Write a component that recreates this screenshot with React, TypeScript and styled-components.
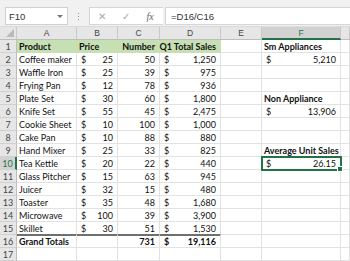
import React from 'react';
import styled, { createGlobalStyle, css } from 'styled-components';

const Global = createGlobalStyle`
  html, body { margin: 0; padding: 0; background: #ffffff; }
  body {
    width: 350px; height: 261px; overflow: hidden;
    font-family: Lato, "Liberation Sans", sans-serif;
    color: #111;
  }
`;

const Page = styled.div`
  display: flex;
  flex-direction: column;
  width: 350px;
  height: 261px;
  overflow: hidden;
`;

const FormulaBar = styled.div`
  display: flex;
  align-items: flex-start;
  height: 32px;
  box-sizing: border-box;
  padding: 7px 0 0 5px;
  background: #f1f1f1;
  border-bottom: 1px solid #dadada;
`;

const NameBox = styled.div`
  display: flex;
  align-items: center;
  justify-content: space-between;
  width: 63px;
  height: 18px;
  box-sizing: border-box;
  padding: 0 4px 0 3px;
  background: #fff;
  border: 1px solid #d0d0d0;
  font-family: "Liberation Sans", Arial, sans-serif;
  font-size: 9.5px;
  color: #333;
`;

const Caret = styled.span`
  width: 0; height: 0;
  border-left: 3px solid transparent;
  border-right: 3px solid transparent;
  border-top: 3px solid #777;
`;

const Grip = styled.div`
  display: flex;
  flex-direction: column;
  justify-content: center;
  gap: 2px;
  width: 21px;
  height: 18px;
  align-items: center;
  & > span { width: 1px; height: 1px; background: #9a9a9a; }
`;

const ButtonsBox = styled.div`
  display: flex;
  align-items: center;
  width: 74px;
  height: 18px;
  box-sizing: border-box;
  background: #fff;
  border: 1px solid #d6d6d6;
  border-right: none;
`;

const FxButton = styled.div<{ $w: number }>`
  display: flex;
  align-items: center;
  justify-content: center;
  width: ${p => p.$w}px;
  height: 16px;
  color: #a8a8a8;
  font-size: 10px;
`;

const FxText = styled.span`
  font-family: "Liberation Serif", serif;
  font-style: italic;
  font-size: 10px;
  color: #666;
`;

const FormulaInput = styled.div`
  flex: 1;
  display: flex;
  align-items: center;
  height: 18px;
  margin-left: 2px;
  box-sizing: border-box;
  padding-left: 5px;
  background: #fff;
  border: 1px solid #d6d6d6;
  border-right: none;
  font-family: "Liberation Sans", Arial, sans-serif;
  font-size: 9.5px;
  color: #333;
`;

const Sheet = styled.div`
  display: grid;
  grid-template-columns: 17px 60px 41px 42px 61px 41px 79px 1fr;
  grid-auto-rows: 13px;
  font-size: 9px;
`;

const Corner = styled.div`
  position: relative;
  background: #e6e6e6;
  border-right: 1px solid #c8c8c8;
  border-bottom: 1px solid #bdbdbd;
  box-sizing: border-box;
  &::after {
    content: '';
    position: absolute;
    right: 2px; bottom: 2px;
    width: 0; height: 0;
    border-left: 8px solid transparent;
    border-bottom: 8px solid #b9b9b9;
  }
`;

const ColHeader = styled.div<{ $active?: boolean }>`
  display: flex;
  align-items: center;
  justify-content: center;
  box-sizing: border-box;
  background: ${p => (p.$active ? '#d2d2d2' : '#e6e6e6')};
  border-right: 1px solid #c8c8c8;
  border-bottom: ${p => (p.$active ? '2px solid #217346' : '1px solid #bdbdbd')};
  color: ${p => (p.$active ? '#217346' : '#444')};
  font-family: "Liberation Sans", Arial, sans-serif;
  font-size: 8.5px;
  padding-top: ${p => (p.$active ? '1px' : '0')};
`;

const RowHeader = styled.div<{ $active?: boolean }>`
  display: flex;
  align-items: center;
  justify-content: center;
  box-sizing: border-box;
  background: ${p => (p.$active ? '#d2d2d2' : '#e6e6e6')};
  border-right: ${p => (p.$active ? '2px solid #217346' : '1px solid #bdbdbd')};
  border-bottom: 1px solid #d0d0d0;
  color: ${p => (p.$active ? '#217346' : '#444')};
  font-size: 9px;
`;

type CellProps = {
  $align?: 'left' | 'right';
  $bold?: boolean;
  $fill?: boolean;
  $ruleBelow?: boolean;
  $ruleAbove?: boolean;
  $selected?: boolean;
};

const Cell = styled.div<CellProps>`
  position: relative;
  display: flex;
  align-items: center;
  justify-content: ${p => (p.$align === 'right' ? 'flex-end' : 'flex-start')};
  box-sizing: border-box;
  padding: 1px 4px 0 2px;
  white-space: nowrap;
  overflow: visible;
  line-height: 12px;
  font-weight: ${p => (p.$bold ? 700 : 400)};
  background: ${p => (p.$fill ? '#c6e0b4' : '#fff')};
  border-right: 1px solid ${p => (p.$fill ? '#c6e0b4' : '#e2e2e2')};
  border-bottom: 1px solid ${p => (p.$ruleBelow ? '#6f6f6f' : p.$fill ? '#c6e0b4' : '#e2e2e2')};
  ${p => p.$ruleAbove && css`box-shadow: inset 0 1px 0 #6f6f6f;`}
  ${p =>
    p.$selected &&
    css`
      z-index: 2;
      outline: 2px solid #217346;
      outline-offset: -1px;
      &::after {
        content: '';
        position: absolute;
        right: -3px; bottom: -3px;
        width: 4px; height: 4px;
        background: #217346;
        border: 1px solid #fff;
      }
    `}
`;

const Acct = styled.span`
  display: flex;
  justify-content: space-between;
  width: 100%;
  padding-left: 2px;
`;

type Spec = {
  t?: string;
  acct?: string;
  right?: boolean;
  bold?: boolean;
  fill?: boolean;
  ruleBelow?: boolean;
  ruleAbove?: boolean;
  selected?: boolean;
};

const products: [string, string, string, string][] = [
  ['Coffee maker', '25', '50', '1,250'],
  ['Waffle Iron', '25', '39', '975'],
  ['Frying Pan', '12', '78', '936'],
  ['Plate Set', '30', '60', '1,800'],
  ['Knife Set', '55', '45', '2,475'],
  ['Cookie Sheet', '10', '100', '1,000'],
  ['Cake Pan', '10', '88', '880'],
  ['Hand Mixer', '25', '33', '825'],
  ['Tea Kettle', '20', '22', '440'],
  ['Glass Pitcher', '15', '63', '945'],
  ['Juicer', '32', '15', '480'],
  ['Toaster', '35', '48', '1,680'],
  ['Microwave', '100', '39', '3,900'],
  ['Skillet', '30', '51', '1,530'],
];

const fCol: Record<number, Spec> = {
  1: { t: 'Sm Appliances', bold: true },
  2: { acct: '5,210' },
  5: { t: 'Non Appliance', bold: true },
  6: { acct: '13,906' },
  9: { t: 'Average Unit Sales', bold: true },
  10: { acct: '26.15', selected: true },
};

function buildRows(): Spec[][] {
  const rows: Spec[][] = [];
  rows.push([
    { t: 'Product', bold: true, fill: true },
    { t: 'Price', bold: true, fill: true },
    { t: 'Number', bold: true, fill: true, right: true },
    { t: 'Q1 Total Sales', bold: true, fill: true, right: true },
    {},
    fCol[1],
    {},
  ]);
  products.forEach(([name, price, num, total], i) => {
    const r = i + 2;
    const last = r === 15;
    rows.push([
      { t: name, ruleBelow: last },
      { acct: price, ruleBelow: last },
      { t: num, right: true, ruleBelow: last },
      { acct: total, ruleBelow: last },
      {},
      fCol[r] || {},
      {},
    ]);
  });
  rows.push([
    { t: 'Grand Totals', bold: true, ruleAbove: true },
    { ruleAbove: true },
    { t: '731', bold: true, right: true, ruleAbove: true },
    { acct: '19,116', bold: true, ruleAbove: true },
    {},
    {},
    {},
  ]);
  rows.push([{}, {}, {}, {}, {}, {}, {}]);
  return rows;
}

const cols = ['A', 'B', 'C', 'D', 'E', 'F', 'G'];

export default function App() {
  const rows = buildRows();
  return (
    <Page>
      <Global />
      <FormulaBar>
        <NameBox>
          <span>F10</span>
          <Caret />
        </NameBox>
        <Grip>
          <span />
          <span />
          <span />
        </Grip>
        <ButtonsBox>
          <FxButton $w={24}>✕</FxButton>
          <FxButton $w={24}>✓</FxButton>
          <FxButton $w={24}>
            <FxText>fx</FxText>
          </FxButton>
        </ButtonsBox>
        <FormulaInput>=D16/C16</FormulaInput>
      </FormulaBar>
      <Sheet>
        <Corner />
        {cols.map(c => (
          <ColHeader key={c} $active={c === 'F'}>
            {c === 'G' ? '' : c}
          </ColHeader>
        ))}
        {rows.map((row, ri) => (
          <React.Fragment key={ri}>
            <RowHeader $active={ri + 1 === 10}>{ri + 1}</RowHeader>
            {row.map((s, ci) => (
              <Cell
                key={ci}
                $align={s.right || s.acct ? 'right' : 'left'}
                $bold={s.bold}
                $fill={s.fill}
                $ruleBelow={s.ruleBelow}
                $ruleAbove={s.ruleAbove}
                $selected={s.selected}
              >
                {s.acct ? (
                  <Acct>
                    <span>$</span>
                    <span>{s.acct}</span>
                  </Acct>
                ) : (
                  s.t
                )}
              </Cell>
            ))}
          </React.Fragment>
        ))}
      </Sheet>
    </Page>
  );
}
